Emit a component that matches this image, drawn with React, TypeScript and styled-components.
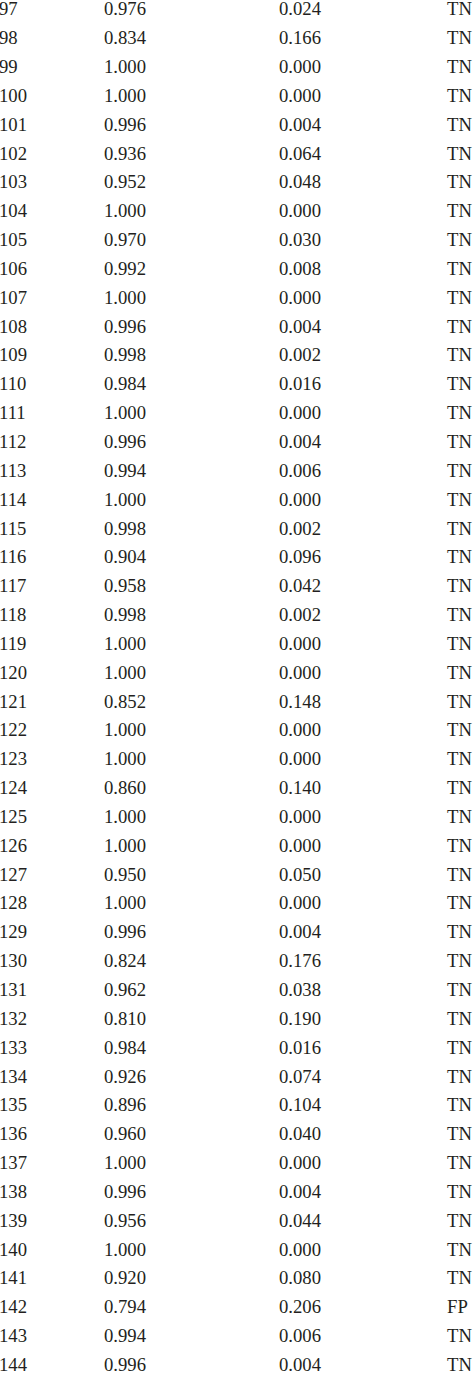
import React, {FC} from 'react';
import styled, {createGlobalStyle} from "styled-components";

const GlobalStyle = createGlobalStyle`
  html, body {
    margin: 0;
    padding: 0;
    background: #fff;
    overflow: hidden;
  }
`

const rowHeight = 28.85;

const TableStyled = styled.div`
  margin-top: -4.7px;
  margin-left: -1px;
  font-family: "Liberation Serif", "Times New Roman", serif;
  font-size: 18.7px;
  color: #231f20;
`

const RowStyled = styled.div`
  display: grid;
  grid-template-columns: 105px 175px 168px 1fr;
  height: ${rowHeight}px;
  line-height: ${rowHeight}px;
  white-space: nowrap;
`

const CellStyled = styled.div`
  overflow: visible;
`

const rows: [number, string, string][] = [
    [97, '0.976', 'TN'], [98, '0.834', 'TN'], [99, '1.000', 'TN'], [100, '1.000', 'TN'],
    [101, '0.996', 'TN'], [102, '0.936', 'TN'], [103, '0.952', 'TN'], [104, '1.000', 'TN'],
    [105, '0.970', 'TN'], [106, '0.992', 'TN'], [107, '1.000', 'TN'], [108, '0.996', 'TN'],
    [109, '0.998', 'TN'], [110, '0.984', 'TN'], [111, '1.000', 'TN'], [112, '0.996', 'TN'],
    [113, '0.994', 'TN'], [114, '1.000', 'TN'], [115, '0.998', 'TN'], [116, '0.904', 'TN'],
    [117, '0.958', 'TN'], [118, '0.998', 'TN'], [119, '1.000', 'TN'], [120, '1.000', 'TN'],
    [121, '0.852', 'TN'], [122, '1.000', 'TN'], [123, '1.000', 'TN'], [124, '0.860', 'TN'],
    [125, '1.000', 'TN'], [126, '1.000', 'TN'], [127, '0.950', 'TN'], [128, '1.000', 'TN'],
    [129, '0.996', 'TN'], [130, '0.824', 'TN'], [131, '0.962', 'TN'], [132, '0.810', 'TN'],
    [133, '0.984', 'TN'], [134, '0.926', 'TN'], [135, '0.896', 'TN'], [136, '0.960', 'TN'],
    [137, '1.000', 'TN'], [138, '0.996', 'TN'], [139, '0.956', 'TN'], [140, '1.000', 'TN'],
    [141, '0.920', 'TN'], [142, '0.794', 'FP'], [143, '0.994', 'TN'], [144, '0.996', 'TN'],
];

// second score is just the complement of the first
const complement = (v: string) => (1 - parseFloat(v)).toFixed(3);

const App: FC = () => {
    return (
        <>
            <GlobalStyle/>
            <TableStyled>
                {rows.map(([id, score, label]) => (
                    <RowStyled key={id}>
                        <CellStyled>{id}</CellStyled>
                        <CellStyled>{score}</CellStyled>
                        <CellStyled>{complement(score)}</CellStyled>
                        <CellStyled>{label}</CellStyled>
                    </RowStyled>
                ))}
            </TableStyled>
        </>
    );
};

export default App;
